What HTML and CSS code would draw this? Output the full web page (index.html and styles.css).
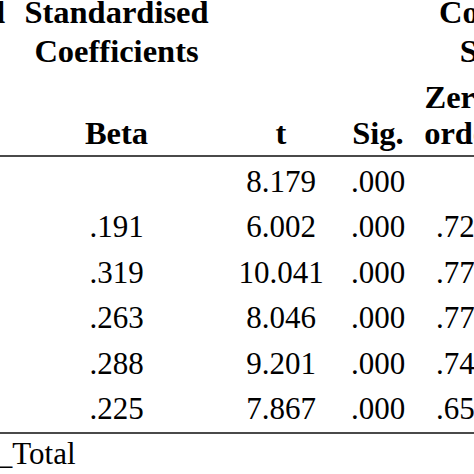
FILE: index.html
```html
<!DOCTYPE html>
<html>
<head>
<meta charset="utf-8">
<link rel="stylesheet" href="styles.css">
</head>
<body>
<table class="coef">
  <colgroup>
    <col class="c-se"><col class="c-beta"><col class="c-t"><col class="c-sig"><col class="c-zero"><col class="c-partial">
  </colgroup>
  <thead>
    <tr>
      <th class="grp">Unstandardised<br>Coefficients</th>
      <th class="grp">Standardised<br>Coefficients</th>
      <th class="sub" rowspan="2">t</th>
      <th class="sub" rowspan="2">Sig.</th>
      <th class="grp" colspan="2">Collinearity<br>Statistics</th>
    </tr>
    <tr>
      <th class="sub">Std. Error</th>
      <th class="sub">Beta</th>
      <th class="sub">Zero-<br>order</th>
      <th class="sub">Partial</th>
    </tr>
  </thead>
  <tbody>
    <tr><td>.196</td><td></td><td>8.179</td><td>.000</td><td></td><td></td></tr>
    <tr><td>.047</td><td>.191</td><td>6.002</td><td>.000</td><td>.723</td><td>.277</td></tr>
    <tr><td>.041</td><td>.319</td><td>10.041</td><td>.000</td><td>.775</td><td>.424</td></tr>
    <tr><td>.043</td><td>.263</td><td>8.046</td><td>.000</td><td>.771</td><td>.356</td></tr>
    <tr><td>.040</td><td>.288</td><td>9.201</td><td>.000</td><td>.746</td><td>.396</td></tr>
    <tr><td>.038</td><td>.225</td><td>7.867</td><td>.000</td><td>.652</td><td>.349</td></tr>
  </tbody>
</table>
<div class="note">a. Dependent Variable: Performance_Total</div>
</body>
</html>
```

FILE: styles.css
```css
html, body {
  margin: 0;
  padding: 0;
  background: #fff;
}
body {
  width: 474px;
  height: 474px;
  overflow: hidden;
  font-family: "Liberation Serif", "Times New Roman", serif;
  color: #000;
}
.coef {
  border-collapse: separate;
  border-spacing: 0;
  table-layout: fixed;
  width: 847px;
  margin: -7.5px 0 0 -220px;
}
.c-se { width: 230px; }
.c-beta { width: 213px; }
.c-t { width: 116px; }
.c-sig { width: 78px; }
.c-zero { width: 92px; }
.c-partial { width: 118px; }
th, td {
  padding: 0;
  text-align: center;
  white-space: nowrap;
}
th {
  font-weight: bold;
  font-size: 32.5px;
}
.grp {
  line-height: 39px;
  vertical-align: top;
}
.sub {
  line-height: 36px;
  vertical-align: bottom;
  padding: 8px 0 4px;
  border-bottom: 2px solid #4a4a4a;
}
td {
  font-size: 31px;
  line-height: 45.6px;
}
tbody tr:first-child td {
  padding-top: 2px;
}
tbody tr:last-child td {
  border-bottom: 2px solid #4a4a4a;
}
.note {
  width: 600px;
  margin: 2px 0 0 -524.5px;
  text-align: right;
  font-size: 31px;
  line-height: 36px;
  white-space: nowrap;
}
```
